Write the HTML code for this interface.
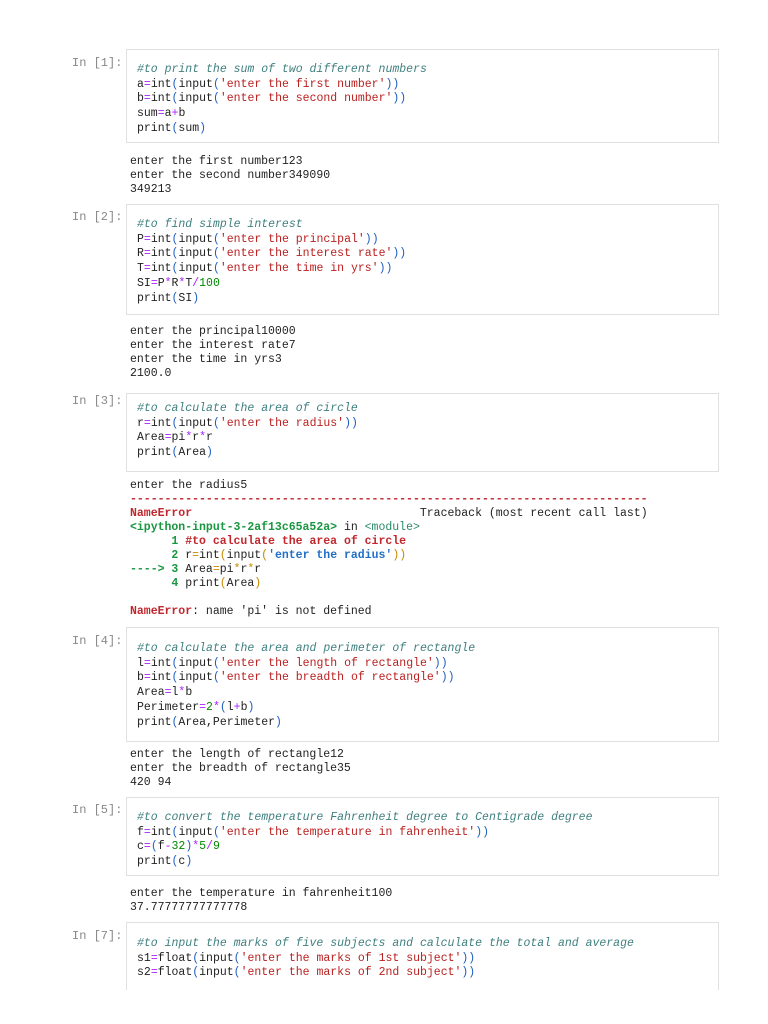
<!DOCTYPE html>
<html><head><meta charset="utf-8"><style>
body{margin:0;width:768px;height:1024px;background:#fff;position:relative;overflow:hidden;font-family:"Liberation Mono",monospace;font-size:11.5px;color:#222}
.box{position:absolute;left:126px;width:591px;border:1px solid #e0e0e0;background:#fff}
.p{position:absolute;left:72px;color:#888;font-size:12px}
pre{position:absolute;margin:0;font:inherit;line-height:14.7px;white-space:pre}
.c{left:137px}.o{left:130px;line-height:14px}
.cm{color:#408080;font-style:italic}.s{color:#BA2121}.op{color:#AA22FF}.b{color:#1f5fbf}.n{color:#080}
.r{color:#c1272d;font-weight:bold}.g{color:#1a9641;font-weight:bold}.bl{color:#1f6fc6;font-weight:bold}.y{color:#c88a00}.gt{color:#2a8a6a}
</style></head><body>
<div class="p" style="top:56px">In [1]:</div>
<div class="box" style="top:49px;height:92px"></div>
<pre class="c" style="top:63px"><span class="cm">#to print the sum of two different numbers</span>
a<span class="op">=</span>int<span class="b">(</span>input<span class="b">(</span><span class="s">'enter the first number'</span><span class="b">))</span>
b<span class="op">=</span>int<span class="b">(</span>input<span class="b">(</span><span class="s">'enter the second number'</span><span class="b">))</span>
sum<span class="op">=</span>a<span class="op">+</span>b
print<span class="b">(</span>sum<span class="b">)</span></pre>
<pre class="o" style="top:155px">enter the first number123
enter the second number349090
349213</pre>

<div class="p" style="top:210px">In [2]:</div>
<div class="box" style="top:204px;height:109px"></div>
<pre class="c" style="top:218px"><span class="cm">#to find simple interest</span>
P<span class="op">=</span>int<span class="b">(</span>input<span class="b">(</span><span class="s">'enter the principal'</span><span class="b">))</span>
R<span class="op">=</span>int<span class="b">(</span>input<span class="b">(</span><span class="s">'enter the interest rate'</span><span class="b">))</span>
T<span class="op">=</span>int<span class="b">(</span>input<span class="b">(</span><span class="s">'enter the time in yrs'</span><span class="b">))</span>
SI<span class="op">=</span>P<span class="op">*</span>R<span class="op">*</span>T<span class="op">/</span><span class="n">100</span>
print<span class="b">(</span>SI<span class="b">)</span></pre>
<pre class="o" style="top:325px">enter the principal10000
enter the interest rate7
enter the time in yrs3
2100.0</pre>

<div class="p" style="top:394px">In [3]:</div>
<div class="box" style="top:393px;height:77px"></div>
<pre class="c" style="top:402px"><span class="cm">#to calculate the area of circle</span>
r<span class="op">=</span>int<span class="b">(</span>input<span class="b">(</span><span class="s">'enter the radius'</span><span class="b">))</span>
Area<span class="op">=</span>pi<span class="op">*</span>r<span class="op">*</span>r
print<span class="b">(</span>Area<span class="b">)</span></pre>
<pre class="o" style="top:479px">enter the radius5
<span class="r">---------------------------------------------------------------------------</span>
<span class="r">NameError</span>                                 Traceback (most recent call last)
<span class="g">&lt;ipython-input-3-2af13c65a52a&gt;</span> in <span class="gt">&lt;module&gt;</span>
<span class="g">      1</span> <span class="r">#to calculate the area of circle</span>
<span class="g">      2</span> r<span class="y">=</span>int<span class="y">(</span>input<span class="y">(</span><span class="bl">'enter the radius'</span><span class="y">))</span>
<span class="g">----&gt; 3</span> Area<span class="y">=</span>pi<span class="y">*</span>r<span class="y">*</span>r
<span class="g">      4</span> print<span class="y">(</span>Area<span class="y">)</span>

<span class="r">NameError</span>: name 'pi' is not defined</pre>

<div class="p" style="top:634px">In [4]:</div>
<div class="box" style="top:627px;height:113px"></div>
<pre class="c" style="top:642px"><span class="cm">#to calculate the area and perimeter of rectangle</span>
l<span class="op">=</span>int<span class="b">(</span>input<span class="b">(</span><span class="s">'enter the length of rectangle'</span><span class="b">))</span>
b<span class="op">=</span>int<span class="b">(</span>input<span class="b">(</span><span class="s">'enter the breadth of rectangle'</span><span class="b">))</span>
Area<span class="op">=</span>l<span class="op">*</span>b
Perimeter<span class="op">=</span><span class="n">2</span><span class="op">*</span><span class="b">(</span>l<span class="op">+</span>b<span class="b">)</span>
print<span class="b">(</span>Area,Perimeter<span class="b">)</span></pre>
<pre class="o" style="top:748px">enter the length of rectangle12
enter the breadth of rectangle35
420 94</pre>

<div class="p" style="top:803px">In [5]:</div>
<div class="box" style="top:797px;height:77px"></div>
<pre class="c" style="top:811px"><span class="cm">#to convert the temperature Fahrenheit degree to Centigrade degree</span>
f<span class="op">=</span>int<span class="b">(</span>input<span class="b">(</span><span class="s">'enter the temperature in fahrenheit'</span><span class="b">))</span>
c<span class="op">=</span><span class="b">(</span>f<span class="op">-</span><span class="n">32</span><span class="b">)</span><span class="op">*</span><span class="n">5</span><span class="op">/</span><span class="n">9</span>
print<span class="b">(</span>c<span class="b">)</span></pre>
<pre class="o" style="top:887px">enter the temperature in fahrenheit100
37.77777777777778</pre>

<div class="p" style="top:929px">In [7]:</div>
<div class="box" style="top:922px;height:80px;border-bottom:none"></div>
<pre class="c" style="top:937px"><span class="cm">#to input the marks of five subjects and calculate the total and average</span>
s1<span class="op">=</span>float<span class="b">(</span>input<span class="b">(</span><span class="s">'enter the marks of 1st subject'</span><span class="b">))</span>
s2<span class="op">=</span>float<span class="b">(</span>input<span class="b">(</span><span class="s">'enter the marks of 2nd subject'</span><span class="b">))</span></pre>
<div style="position:absolute;left:0;top:990px;width:768px;height:34px;background:#fff"></div>
</body></html>
